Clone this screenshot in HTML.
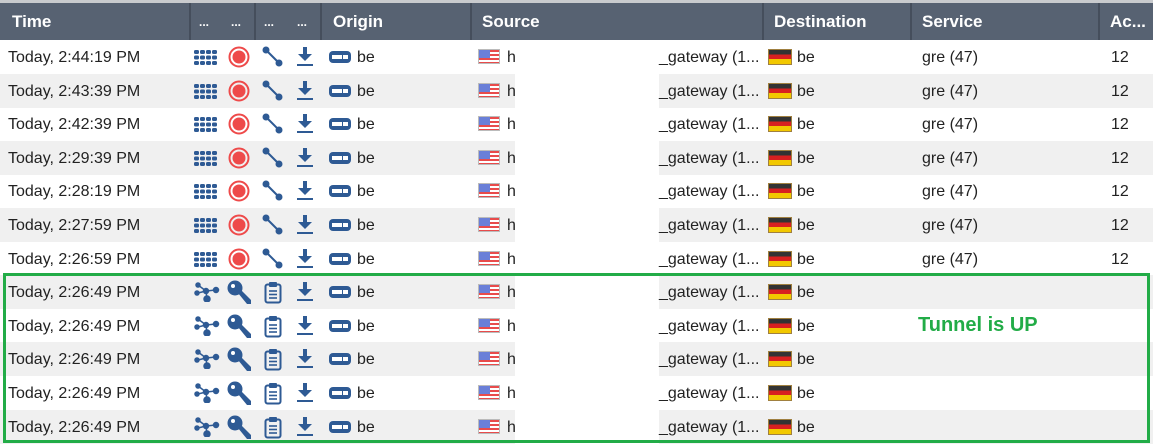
<!DOCTYPE html>
<html><head><meta charset="utf-8"><style>
*{margin:0;padding:0;box-sizing:border-box}
body{width:1153px;height:447px;overflow:hidden;background:#fff;font-family:"Liberation Sans",sans-serif;position:relative}
.top{position:absolute;left:0;top:0;width:1153px;height:3px;background:#c9cbce}
.hdr{position:absolute;left:0;top:3px;width:1153px;height:37px;background:#576272}
.hdr span{position:absolute;top:9px;color:#fff;font-weight:bold;font-size:17px}
.sep{position:absolute;top:3px;width:2px;height:37px;background:#454e5c}
.row{position:absolute;left:0;width:1153px;height:34px;font-size:16px;color:#222}
.g{background:#f0f0f0}
.row span{position:absolute;top:9px;white-space:nowrap}
.row svg{position:absolute}
.t{left:8px}.o{left:357px}.h{left:507px}.gw{left:659px}.d{left:797px}.s{left:922px}.a{left:1111px}
.red{position:absolute;left:515px;top:0;width:144px;height:34px;background:#fff}
.fu{position:absolute;left:478px;top:9px;width:22px;height:15px;background:repeating-linear-gradient(#e84b4b 0 2px,#fff 2px 4px);border:1px solid #bbb}
.fu:before{content:"";position:absolute;left:0;top:0;width:11px;height:8px;background:#6a7fd8}
.fd{position:absolute;left:768px;top:9px;width:24px;height:16px;border:1px solid #a08040;background:linear-gradient(#333 0 33%,#d82020 33% 66%,#f2c800 66%)}
.i1{left:194px;top:10px}.i2{left:228px;top:6px}.i3{left:261px;top:6px}.i4{left:296px;top:7px}.i5{left:329px;top:10px}
.j1{left:194px;top:7px}.j2{left:227px;top:5px}.j3{left:264px;top:6px}
.box{position:absolute;left:3px;top:273px;width:1147px;height:170px;border:3px solid #22ac47}
.tun{position:absolute;left:918px;top:314px;color:#22ac47;font-weight:bold;font-size:20px}
</style></head><body>
<svg width="0" height="0" style="position:absolute">
<defs>
<symbol id="grid" viewBox="0 0 24 15"><g fill="#2e5a94"><rect x="0" y="0" width="5" height="4" rx="1.5"/><rect x="6" y="0" width="5" height="4" rx="1.5"/><rect x="12" y="0" width="5" height="4" rx="1.5"/><rect x="18" y="0" width="5" height="4" rx="1.5"/><rect x="0" y="5.5" width="5" height="4" rx="1.5"/><rect x="6" y="5.5" width="5" height="4" rx="1.5"/><rect x="12" y="5.5" width="5" height="4" rx="1.5"/><rect x="18" y="5.5" width="5" height="4" rx="1.5"/><rect x="0" y="11" width="5" height="4" rx="1.5"/><rect x="6" y="11" width="5" height="4" rx="1.5"/><rect x="12" y="11" width="5" height="4" rx="1.5"/><rect x="18" y="11" width="5" height="4" rx="1.5"/></g></symbol>
<symbol id="rec" viewBox="0 0 22 22"><circle cx="11" cy="11" r="9.5" fill="none" stroke="#ee4a4a" stroke-width="2"/><circle cx="11" cy="11" r="6.5" fill="#ee4a4a"/></symbol>
<symbol id="link" viewBox="0 0 24 22"><line x1="5" y1="4" x2="18" y2="17" stroke="#2e5a94" stroke-width="2"/><circle cx="5" cy="4" r="3.5" fill="#2e5a94"/><circle cx="18" cy="17" r="3.5" fill="#2e5a94"/></symbol>
<symbol id="dl" viewBox="0 0 18 20"><g fill="#2e5a94"><rect x="7" y="0" width="4" height="8"/><polygon points="2,7 16,7 9,14"/><rect x="1" y="17" width="16" height="2"/></g></symbol>
<symbol id="dev" viewBox="0 0 22 14"><rect x="0" y="1" width="22" height="12" rx="4" fill="#2e5a94"/><rect x="3" y="5" width="10" height="4" fill="#fff"/><rect x="14" y="5" width="5" height="4" fill="#fff"/></symbol>
<symbol id="net" viewBox="0 0 26 20"><g fill="#2e5a94" stroke="#2e5a94" stroke-width="1.5"><line x1="4" y1="3" x2="12" y2="9"/><line x1="12" y1="9" x2="22" y2="8"/><line x1="12" y1="9" x2="13" y2="17"/><line x1="4" y1="11" x2="12" y2="9"/><circle cx="4" cy="3" r="2"/><circle cx="3" cy="11" r="2"/><circle cx="12" cy="9" r="2.5"/><circle cx="22" cy="8" r="2.5"/><circle cx="13" cy="17" r="3"/></g></symbol>
<symbol id="key" viewBox="0 0 26 26"><circle cx="8" cy="8" r="7.5" fill="#2e5a94"/><circle cx="6" cy="6" r="2" fill="#fff"/><polygon points="11,13 14,10 24,20 24,24 20,24" fill="#2e5a94"/></symbol>
<symbol id="clip" viewBox="0 0 18 23"><rect x="1.5" y="3.5" width="15" height="18" rx="2" fill="none" stroke="#2e5a94" stroke-width="2"/><rect x="5" y="1" width="8" height="5" rx="1" fill="#2e5a94"/><g stroke="#2e5a94" stroke-width="1.6"><line x1="5" y1="10" x2="13" y2="10"/><line x1="5" y1="13.5" x2="13" y2="13.5"/><line x1="5" y1="17" x2="13" y2="17"/></g></symbol>
</defs></svg>
<div class="top"></div>
<div class="hdr">
<span style="left:12px">Time</span>
<span style="left:199px;font-size:12px;top:12px">...</span><span style="left:231px;font-size:12px;top:12px">...</span>
<span style="left:264px;font-size:12px;top:12px">...</span><span style="left:297px;font-size:12px;top:12px">...</span>
<span style="left:333px">Origin</span>
<span style="left:482px">Source</span>
<span style="left:774px">Destination</span>
<span style="left:922px">Service</span>
<span style="left:1110px">Ac...</span>
</div>
<div class="sep" style="left:189px"></div><div class="sep" style="left:254px"></div><div class="sep" style="left:320px"></div><div class="sep" style="left:470px"></div><div class="sep" style="left:762px"></div><div class="sep" style="left:910px"></div><div class="sep" style="left:1098px"></div>

<div class="row" style="top:40px"><span class="t">Today, 2:44:19 PM</span><svg class="i1" width="24" height="15"><use href="#grid"/></svg><svg class="i2" width="22" height="22"><use href="#rec"/></svg><svg class="i3" width="24" height="22"><use href="#link"/></svg><svg class="i4" width="18" height="20"><use href="#dl"/></svg><svg class="i5" width="22" height="14"><use href="#dev"/></svg><span class="o">be</span><div class="fu"></div><span class="h">h</span><div class="red"></div><span class="gw">_gateway (1...</span><div class="fd"></div><span class="d">be</span><span class="s">gre (47)</span><span class="a">12</span></div>
<div class="row g" style="top:74px"><span class="t">Today, 2:43:39 PM</span><svg class="i1" width="24" height="15"><use href="#grid"/></svg><svg class="i2" width="22" height="22"><use href="#rec"/></svg><svg class="i3" width="24" height="22"><use href="#link"/></svg><svg class="i4" width="18" height="20"><use href="#dl"/></svg><svg class="i5" width="22" height="14"><use href="#dev"/></svg><span class="o">be</span><div class="fu"></div><span class="h">h</span><div class="red"></div><span class="gw">_gateway (1...</span><div class="fd"></div><span class="d">be</span><span class="s">gre (47)</span><span class="a">12</span></div>
<div class="row" style="top:107px"><span class="t">Today, 2:42:39 PM</span><svg class="i1" width="24" height="15"><use href="#grid"/></svg><svg class="i2" width="22" height="22"><use href="#rec"/></svg><svg class="i3" width="24" height="22"><use href="#link"/></svg><svg class="i4" width="18" height="20"><use href="#dl"/></svg><svg class="i5" width="22" height="14"><use href="#dev"/></svg><span class="o">be</span><div class="fu"></div><span class="h">h</span><div class="red"></div><span class="gw">_gateway (1...</span><div class="fd"></div><span class="d">be</span><span class="s">gre (47)</span><span class="a">12</span></div>
<div class="row g" style="top:141px"><span class="t">Today, 2:29:39 PM</span><svg class="i1" width="24" height="15"><use href="#grid"/></svg><svg class="i2" width="22" height="22"><use href="#rec"/></svg><svg class="i3" width="24" height="22"><use href="#link"/></svg><svg class="i4" width="18" height="20"><use href="#dl"/></svg><svg class="i5" width="22" height="14"><use href="#dev"/></svg><span class="o">be</span><div class="fu"></div><span class="h">h</span><div class="red"></div><span class="gw">_gateway (1...</span><div class="fd"></div><span class="d">be</span><span class="s">gre (47)</span><span class="a">12</span></div>
<div class="row" style="top:174px"><span class="t">Today, 2:28:19 PM</span><svg class="i1" width="24" height="15"><use href="#grid"/></svg><svg class="i2" width="22" height="22"><use href="#rec"/></svg><svg class="i3" width="24" height="22"><use href="#link"/></svg><svg class="i4" width="18" height="20"><use href="#dl"/></svg><svg class="i5" width="22" height="14"><use href="#dev"/></svg><span class="o">be</span><div class="fu"></div><span class="h">h</span><div class="red"></div><span class="gw">_gateway (1...</span><div class="fd"></div><span class="d">be</span><span class="s">gre (47)</span><span class="a">12</span></div>
<div class="row g" style="top:208px"><span class="t">Today, 2:27:59 PM</span><svg class="i1" width="24" height="15"><use href="#grid"/></svg><svg class="i2" width="22" height="22"><use href="#rec"/></svg><svg class="i3" width="24" height="22"><use href="#link"/></svg><svg class="i4" width="18" height="20"><use href="#dl"/></svg><svg class="i5" width="22" height="14"><use href="#dev"/></svg><span class="o">be</span><div class="fu"></div><span class="h">h</span><div class="red"></div><span class="gw">_gateway (1...</span><div class="fd"></div><span class="d">be</span><span class="s">gre (47)</span><span class="a">12</span></div>
<div class="row" style="top:242px"><span class="t">Today, 2:26:59 PM</span><svg class="i1" width="24" height="15"><use href="#grid"/></svg><svg class="i2" width="22" height="22"><use href="#rec"/></svg><svg class="i3" width="24" height="22"><use href="#link"/></svg><svg class="i4" width="18" height="20"><use href="#dl"/></svg><svg class="i5" width="22" height="14"><use href="#dev"/></svg><span class="o">be</span><div class="fu"></div><span class="h">h</span><div class="red"></div><span class="gw">_gateway (1...</span><div class="fd"></div><span class="d">be</span><span class="s">gre (47)</span><span class="a">12</span></div>
<div class="row g" style="top:275px"><span class="t">Today, 2:26:49 PM</span><svg class="j1" width="26" height="20"><use href="#net"/></svg><svg class="j2" width="26" height="26"><use href="#key"/></svg><svg class="j3" width="18" height="23"><use href="#clip"/></svg><svg class="i4" width="18" height="20"><use href="#dl"/></svg><svg class="i5" width="22" height="14"><use href="#dev"/></svg><span class="o">be</span><div class="fu"></div><span class="h">h</span><div class="red"></div><span class="gw">_gateway (1...</span><div class="fd"></div><span class="d">be</span></div>
<div class="row" style="top:309px"><span class="t">Today, 2:26:49 PM</span><svg class="j1" width="26" height="20"><use href="#net"/></svg><svg class="j2" width="26" height="26"><use href="#key"/></svg><svg class="j3" width="18" height="23"><use href="#clip"/></svg><svg class="i4" width="18" height="20"><use href="#dl"/></svg><svg class="i5" width="22" height="14"><use href="#dev"/></svg><span class="o">be</span><div class="fu"></div><span class="h">h</span><div class="red"></div><span class="gw">_gateway (1...</span><div class="fd"></div><span class="d">be</span></div>
<div class="row g" style="top:342px"><span class="t">Today, 2:26:49 PM</span><svg class="j1" width="26" height="20"><use href="#net"/></svg><svg class="j2" width="26" height="26"><use href="#key"/></svg><svg class="j3" width="18" height="23"><use href="#clip"/></svg><svg class="i4" width="18" height="20"><use href="#dl"/></svg><svg class="i5" width="22" height="14"><use href="#dev"/></svg><span class="o">be</span><div class="fu"></div><span class="h">h</span><div class="red"></div><span class="gw">_gateway (1...</span><div class="fd"></div><span class="d">be</span></div>
<div class="row" style="top:376px"><span class="t">Today, 2:26:49 PM</span><svg class="j1" width="26" height="20"><use href="#net"/></svg><svg class="j2" width="26" height="26"><use href="#key"/></svg><svg class="j3" width="18" height="23"><use href="#clip"/></svg><svg class="i4" width="18" height="20"><use href="#dl"/></svg><svg class="i5" width="22" height="14"><use href="#dev"/></svg><span class="o">be</span><div class="fu"></div><span class="h">h</span><div class="red"></div><span class="gw">_gateway (1...</span><div class="fd"></div><span class="d">be</span></div>
<div class="row g" style="top:410px"><span class="t">Today, 2:26:49 PM</span><svg class="j1" width="26" height="20"><use href="#net"/></svg><svg class="j2" width="26" height="26"><use href="#key"/></svg><svg class="j3" width="18" height="23"><use href="#clip"/></svg><svg class="i4" width="18" height="20"><use href="#dl"/></svg><svg class="i5" width="22" height="14"><use href="#dev"/></svg><span class="o">be</span><div class="fu"></div><span class="h">h</span><div class="red"></div><span class="gw">_gateway (1...</span><div class="fd"></div><span class="d">be</span></div>

<div class="box"></div>
<div class="tun">Tunnel is UP</div>
</body></html>
